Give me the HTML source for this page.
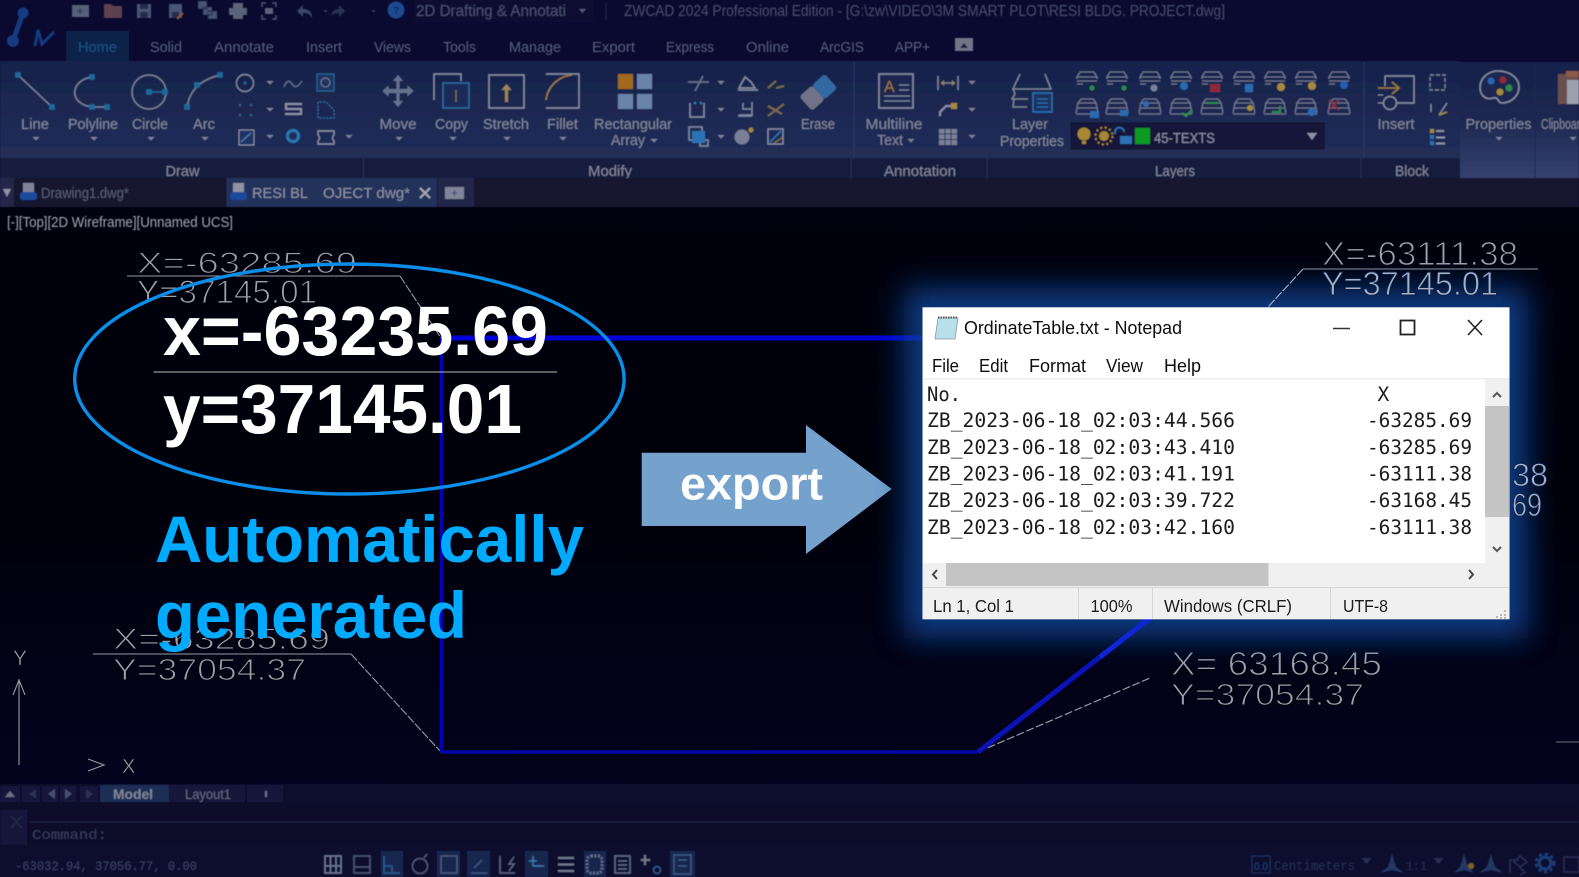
<!DOCTYPE html>
<html lang="en"><head><meta charset="utf-8"><title>ZWCAD export</title>
<style>
html,body{margin:0;padding:0;width:1579px;height:877px;overflow:hidden;background:#00000c}
svg{display:block;position:absolute;left:0;top:0}
text{font-family:"Liberation Sans",sans-serif}
text.mono{font-family:"Liberation Mono",monospace}
.dj text{font-family:"DejaVu Sans Mono",monospace}
</style></head><body>
<svg width="1579" height="877" viewBox="0 0 1579 877" xmlns="http://www.w3.org/2000/svg">
<defs>
<linearGradient id="bgd" x1="0" y1="0" x2="0" y2="1"><stop offset="0" stop-color="#01010f"/><stop offset=".5" stop-color="#00000a"/><stop offset="1" stop-color="#03031e"/></linearGradient>
<linearGradient id="rib" x1="0" y1="0" x2="0" y2="1"><stop offset="0" stop-color="#16224a"/><stop offset="1" stop-color="#212e58"/></linearGradient>
<linearGradient id="rib2" x1="0" y1="0" x2="0" y2="1"><stop offset="0" stop-color="#16224a"/><stop offset=".5" stop-color="#1c2850"/><stop offset="1" stop-color="#35416e"/></linearGradient>
<filter id="b1" x="-5%" y="-5%" width="110%" height="110%"><feGaussianBlur stdDeviation=".6"/></filter>
<filter id="b2" x="-5%" y="-5%" width="110%" height="110%"><feGaussianBlur stdDeviation=".35"/></filter>
<filter id="gl" x="-20%" y="-30%" width="140%" height="160%"><feGaussianBlur stdDeviation="15"/></filter>
<polygon id="car" points="-3.5,0 3.5,0 0,3.5" fill="#7b8199"/>
<g id="li">
 <path d="M-7-8h14l3 5h-20zM-10-3v2M10-3v2" fill="none" stroke="#6f758e" stroke-width="1.3"/>
 <path d="M-10 1h20M-10 4h6" fill="none" stroke="#6f758e" stroke-width="1.3"/>
</g>
<g id="li2">
 <path d="M-6-9h12l3 4h-18zM-9-5l-1 5h20l-1-5M-10 0l-1 5M10 0l1 5M-11 6h22" fill="none" stroke="#6f758e" stroke-width="1.3"/>
</g>
<rect id="sq" x="-2.8" y="-2.8" width="5.6" height="5.6" fill="#1c6a9c"/>
</defs>

<!-- backgrounds -->
<rect width="1579" height="877" fill="#0a0a30"/>
<rect y="207" width="1579" height="578" fill="url(#bgd)"/>

<!-- CAD drawing -->
<g fill="#a0a0aa" stroke="#01010e" stroke-width="1.100" style="paint-order:fill stroke">
 <text x="137" y="273" font-size="30" textLength="220" lengthAdjust="spacingAndGlyphs">X=-63285.69</text>
 <text x="137" y="303" font-size="32" textLength="180" lengthAdjust="spacingAndGlyphs">Y=37145.01</text>
 <text x="113" y="649" font-size="30" textLength="217" lengthAdjust="spacingAndGlyphs">X=-63285.69</text>
 <text x="113" y="680" font-size="31" textLength="193" lengthAdjust="spacingAndGlyphs">Y=37054.37</text>
 <text x="1171" y="675" font-size="33" textLength="211" lengthAdjust="spacingAndGlyphs">X= 63168.45</text>
 <text x="1171" y="705" font-size="31" textLength="193" lengthAdjust="spacingAndGlyphs">Y=37054.37</text>
 <text x="1322" y="265" font-size="33" textLength="196" lengthAdjust="spacingAndGlyphs">X=-63111.38</text>
 <text x="13" y="665" font-size="21" stroke-width=".5">Y</text>
 <text x="122" y="773" font-size="20" stroke-width=".5">X</text>
</g>
<g fill="none" stroke="#9a9aa5" stroke-width="1.1">
 <path d="M127 276H400M93 654H351M1303 269H1538"/>
 <path d="M400 276L441 338M351 654L441 752" stroke-dasharray="9 1.5"/>
 <path d="M978 752L1150 678" stroke-dasharray="8 2.5" stroke-width="1.2"/>
 <path d="M19 679V765M19 680L13 695M19 680L25 695M88 759L104 765L88 771"/>
 <path d="M1556 742H1579" stroke="#6f6f78"/>
</g>
<!-- blue lines -->
<path d="M441.500 338H925" stroke="#0000d8" stroke-width="5" fill="none"/>
<path d="M441.500 338V752" stroke="#0202b4" stroke-width="3.6" fill="none"/>
<path d="M441 752H978" stroke="#0404a8" stroke-width="3.6" fill="none"/>
<path d="M978 752L1150 618" stroke="#0a12b8" stroke-width="5" fill="none"/>

<!-- Title bar -->
<g filter="url(#b1)">
 <!-- logo -->
 <g fill="none" stroke="#173a80" stroke-width="4">
  <path d="M23 13L13 41" stroke-width="5"/>
  <path d="M35 46L38 30L42 44L54 32" stroke-width="3"/>
 </g>
 <circle cx="23" cy="13" r="5.5" fill="#173a80"/><circle cx="13" cy="41" r="6" fill="#173a80"/>
 <!-- QAT -->
 <rect x="72" y="5" width="17" height="12" fill="#59607a"/><path d="M80 8v6M77 11h6" stroke="#2a3a66" stroke-width="1.3"/>
 <path d="M104 4h7l2 2h9v12h-18z" fill="#5b4250"/>
 <rect x="137" y="4" width="14" height="14" fill="#4c5474"/><rect x="140" y="4" width="8" height="5" fill="#252b4d"/><rect x="140" y="12" width="8" height="6" fill="#252b4d"/>
 <rect x="169" y="4" width="13" height="14" fill="#4c5474"/><rect x="172" y="12" width="7" height="6" fill="#252b4d"/><path d="M177 19l6-6" stroke="#8a5a2a" stroke-width="2"/>
 <path d="M198 1h9v8h-9zM203 7h9v8h-9zM208 11h9v8h-9z" fill="#4c5474" stroke="#1a2248"/>
 <path d="M233 3h10v5h-10zM229 8h18v7h-18zM233 13h10v6h-10z" fill="#5c627c"/>
 <path d="M262 7V3h4M276 7V3h-4M262 15v4h4M276 15v4h-4" stroke="#4c5474" stroke-width="1.5" fill="none"/><rect x="265" y="8" width="8" height="6" fill="#5c627c"/>
 <path d="M297 11l6-6v4c6 0 9 3 9 9c-2-4-5-5-9-5v4z" fill="#3c4568"/>
 <path d="M345 11l-6-6v4c-5 0-7 3-8 7c2-2 4-3 8-3v4z" fill="#2b3152"/>
 <path d="M324 11h3M372 11h3" stroke="#3c4568" stroke-width="1.5"/>
 <circle cx="396" cy="10" r="8.5" fill="#1c4a90"/><text x="396" y="14" font-size="11" fill="#0e2a5c" text-anchor="middle" font-weight="bold">?</text>
 <rect x="414" y="0" width="180" height="22" fill="#0b0b33"/>
 <text x="416" y="16" font-size="16" fill="#484f6e" textLength="150" lengthAdjust="spacingAndGlyphs">2D Drafting &amp; Annotati</text>
 <polygon points="579,9 586,9 582.5,13" fill="#4f5675"/>
 <path d="M606 3V20" stroke="#1d2044" stroke-width="1.5"/>
 <text x="624" y="16" font-size="16" fill="#484f6e" textLength="601" lengthAdjust="spacingAndGlyphs">ZWCAD 2024 Professional Edition - [G:\zw\VIDEO\3M SMART PLOT\RESI BLDG. PROJECT.dwg]</text>

 <!-- ribbon tabs -->
 <rect x="66" y="31" width="63" height="30" fill="#11224a"/>
 <g font-size="14.5" fill="#596180">
  <text x="78" y="52" fill="#1c5184" textLength="39" lengthAdjust="spacingAndGlyphs">Home</text>
  <text x="150" y="52" textLength="32" lengthAdjust="spacingAndGlyphs">Solid</text>
  <text x="214" y="52" textLength="60" lengthAdjust="spacingAndGlyphs">Annotate</text>
  <text x="306" y="52" textLength="36" lengthAdjust="spacingAndGlyphs">Insert</text>
  <text x="374" y="52" textLength="37" lengthAdjust="spacingAndGlyphs">Views</text>
  <text x="443" y="52" textLength="33" lengthAdjust="spacingAndGlyphs">Tools</text>
  <text x="509" y="52" textLength="52" lengthAdjust="spacingAndGlyphs">Manage</text>
  <text x="592" y="52" textLength="43" lengthAdjust="spacingAndGlyphs">Export</text>
  <text x="666" y="52" textLength="48" lengthAdjust="spacingAndGlyphs">Express</text>
  <text x="746" y="52" textLength="43" lengthAdjust="spacingAndGlyphs">Online</text>
  <text x="820" y="52" textLength="44" lengthAdjust="spacingAndGlyphs">ArcGIS</text>
  <text x="895" y="52" textLength="35" lengthAdjust="spacingAndGlyphs">APP+</text>
 </g>
 <rect x="955" y="38" width="18" height="13" fill="#6f7488"/><polygon points="960,48 968,48 964,43" fill="#1a1c3c"/>

 <!-- ribbon body -->
 <rect y="61" width="1460" height="97" fill="url(#rib)"/>
 <rect y="158" width="1460" height="20" fill="#171b3c"/>
 <rect x="1460" y="62" width="119" height="116" fill="url(#rib2)"/>
 <path d="M1535 62V178" stroke="#1a2550" stroke-width="1"/>
 <path d="M363.5 158V178M851 158V178M987 158V178M1361 158V178" stroke="#2c3358"/>
 <path d="M854 62V158M1364 62V158" stroke="#2a3866"/>

 <!-- Draw icons -->
 <g fill="none" stroke="#7a8096" stroke-width="1.5">
  <path d="M18 75L52 107"/>
  <path d="M92 77C70 80 68 104 92 107H107"/>
  <circle cx="149" cy="92" r="17"/><path d="M149 92H165" stroke="#1c6a9c"/>
  <path d="M187 107C190 90 200 80 220 75"/>
 </g>
 <use href="#sq" x="18" y="75"/><use href="#sq" x="52" y="107"/>
 <use href="#sq" x="92" y="77"/><use href="#sq" x="92" y="107"/><use href="#sq" x="107" y="107"/>
 <use href="#sq" x="149" y="92"/><use href="#sq" x="165" y="92"/>
 <use href="#sq" x="187" y="107"/><use href="#sq" x="197" y="85"/><use href="#sq" x="220" y="75"/>
 <!-- Draw small -->
 <circle cx="245" cy="83" r="8.5" fill="none" stroke="#80869c" stroke-width="1.4"/><circle cx="245" cy="83" r="1.5" fill="#1c6a9c"/>
 <path d="M284 87c3-7 5-7 8-3s5 4 10-3" fill="none" stroke="#5d6a8c" stroke-width="1.5"/>
 <rect x="317" y="74" width="17" height="17" fill="#1b3564" stroke="#2c6a9c"/><circle cx="325.500" cy="82.500" r="4.500" fill="none" stroke="#7b8199"/>
 <g fill="#2a6a9c"><rect x="239" y="104" width="2" height="2"/><rect x="250" y="104" width="2" height="2"/><rect x="239" y="114" width="2" height="2"/><rect x="250" y="114" width="2" height="2"/></g>
 <path d="M302 104h-16v5h15v5h-16" fill="none" stroke="#8a90a5" stroke-width="2"/>
 <path d="M318 118v-16h8l8 8v8z" fill="none" stroke="#2c6a9c" stroke-width="1.4" stroke-dasharray="2 1.500"/>
 <rect x="239" y="130" width="15" height="15" fill="#1f3666" stroke="#8a90a5"/><path d="M241 142l10-9" stroke="#6b8ab0"/>
 <circle cx="293" cy="136" r="5.500" fill="none" stroke="#2878b4" stroke-width="3"/>
 <path d="M318 131h16v4c-2 2-2 4 0 6v3h-16v-3c2-2 2-4 0-6z" fill="none" stroke="#8a90a5" stroke-width="1.4"/>
 <use href="#car" x="270" y="81"/><use href="#car" x="270" y="108"/><use href="#car" x="270" y="135"/><use href="#car" x="349" y="135"/>

 <!-- Modify -->
 <path d="M398 75l-5 6h3.500v8h-8v-3.500l-6 5.500l6 5.500v-3.500h8v8h-3.500l5 6l5-6h-3.500v-8h8v3.500l6-5.500l-6-5.500v3.500h-8v-8h3.500z" fill="#66708f"/>
 <path d="M434 100V74h27v7" fill="none" stroke="#8a90a5" stroke-width="1.4"/><rect x="443" y="83" width="26" height="25" fill="#1b2c58" stroke="#2c6a9c" stroke-width="1.6"/><path d="M456 90v12" stroke="#8a7040" stroke-width="1.4"/>
 <rect x="489" y="75" width="35" height="33" fill="none" stroke="#8a90a5" stroke-width="1.5"/><path d="M506.500 84l-5 6h3.500v12h3v-12h3.500z" fill="#9c8458"/>
 <path d="M546 74h33v34h-33" fill="none" stroke="#8a90a5" stroke-width="1.4"/><path d="M546 100C548 85 560 76 572 75" fill="none" stroke="#9c7a45" stroke-width="1.6"/>
 <rect x="618" y="74" width="15" height="15" fill="#a2691e"/><rect x="637" y="74" width="15" height="15" fill="#6b83a8"/><rect x="618" y="94" width="15" height="15" fill="#6b83a8"/><rect x="637" y="94" width="15" height="15" fill="#6b83a8"/>
 <!-- modify small -->
 <path d="M688 82h21M703 76L695 91" fill="none" stroke="#6f7690" stroke-width="1.4"/>
 <path d="M739 88l6-11l6 5l4 6zM738 90h20" fill="none" stroke="#8a90a5" stroke-width="1.4"/>
 <path d="M768 88l8-7M776 88l8-2" fill="none" stroke="#7c6c4a" stroke-width="2"/>
 <path d="M690 103v14h14v-14" fill="none" stroke="#8a90a5" stroke-width="1.4"/><path d="M694 103h2M700 103h2" stroke="#2c88c4" stroke-width="2"/>
 <path d="M739 115h13v-13M743 103v6h9M738 116h14" fill="none" stroke="#7f8aa5" stroke-width="1.4"/>
 <path d="M768 116l16-12M768 106l14 8" fill="none" stroke="#7c6c4a" stroke-width="2"/>
 <rect x="689" y="127" width="13" height="13" fill="none" stroke="#7f8aa5" stroke-width="1.5"/><rect x="700" y="140" width="8" height="6" fill="none" stroke="#7f8aa5" stroke-width="1.5"/><rect x="692" y="131" width="13" height="12" fill="#2c72b4"/>
 <circle cx="742" cy="137" r="7.500" fill="#7a7f96"/><circle cx="751" cy="130" r="2.500" fill="#a68a3c"/>
 <rect x="768" y="129" width="15" height="15" fill="none" stroke="#8a90a5" stroke-width="1.4"/><path d="M770 142l11-11" stroke="#2c72b4" stroke-width="1.6"/><path d="M774 143l9-6" stroke="#a68a3c"/>
 <use href="#car" x="721" y="81"/><use href="#car" x="721" y="108"/><use href="#car" x="721" y="135"/>
 <!-- Erase -->
 <g transform="rotate(-42 818 92)"><rect x="801" y="83" width="17" height="19" rx="3" fill="#6f7288"/><rect x="818" y="83" width="17" height="19" rx="3" fill="#3269a2"/></g>
 <!-- Annotation -->
 <rect x="879" y="74" width="34" height="34" fill="#1a2550" stroke="#8a90a5" stroke-width="1.5"/>
 <text x="884" y="92" font-size="16" fill="#9c7c3c">A</text><path d="M899 85h10M899 90h10M884 96h26M884 101h26" stroke="#7f8aa5" stroke-width="1.3"/>
 <path d="M938 76v14M958 76v14M941 83h14" stroke="#80869c" stroke-width="1.5"/><path d="M941 83l3-3v6zM955 83l-3-3v6z" fill="#9c8458"/>
 <path d="M940 116v-4l6-6h8" fill="none" stroke="#8a90a5" stroke-width="2"/><rect x="951" y="103" width="6" height="6" fill="#a68a3c"/>
 <rect x="939" y="129" width="18" height="16" fill="#7b8199"/><path d="M939 134h18M939 139.500h18M945 129v16M951 129v16" stroke="#242f58"/>
 <use href="#car" x="972" y="81"/><use href="#car" x="972" y="108"/><use href="#car" x="972" y="135"/>
 <!-- Layers -->
 <path d="M1020 74l-7 15h38l-6-15M1013 89l2 5l-3 5h16M1014 99l-1 8h14" fill="none" stroke="#838aa0" stroke-width="1.3"/>
 <rect x="1033" y="93" width="19" height="19" fill="#1a3160" stroke="#2a72b0" stroke-width="1.5"/><path d="M1037 99h11M1037 103h11M1037 107h11" stroke="#2a72b0" stroke-width="1.2"/>
 <g>
  <use href="#li" x="1087" y="80"/><use href="#li" x="1117" y="80"/><use href="#li" x="1150" y="80"/><use href="#li" x="1181" y="80"/><use href="#li" x="1212" y="80"/><use href="#li" x="1244" y="80"/><use href="#li" x="1275" y="80"/><use href="#li" x="1306" y="80"/><use href="#li" x="1339" y="80"/>
  <use href="#li2" x="1087" y="108"/><use href="#li2" x="1117" y="108"/><use href="#li2" x="1150" y="108"/><use href="#li2" x="1181" y="108"/><use href="#li2" x="1212" y="108"/><use href="#li2" x="1244" y="108"/><use href="#li2" x="1275" y="108"/><use href="#li2" x="1306" y="108"/><use href="#li2" x="1339" y="108"/>
 </g>
 <circle cx="1092" cy="88" r="2.500" fill="#2a8c4a"/><circle cx="1124" cy="88" r="2.500" fill="#2a8c4a"/><circle cx="1154" cy="88" r="3.500" fill="#7b8199"/><circle cx="1184" cy="86" r="4" fill="#2a6ab0"/><rect x="1210" y="84" width="10" height="8" fill="#8c2a3a"/><rect x="1245" y="84" width="8" height="8" fill="#2a6ab0"/><circle cx="1281" cy="87" r="4" fill="#a68a3c"/><circle cx="1312" cy="86" r="4" fill="#a68a3c"/><circle cx="1344" cy="85" r="4" fill="#2a5ab0"/>
 <rect x="1090" y="111" width="9" height="7" fill="#2a6ab0"/><rect x="1120" y="110" width="8" height="6" fill="#2a6ab0"/><circle cx="1146" cy="104" r="3" fill="#2a6ab0"/><path d="M1182 113l4 3l6-6" stroke="#2a8c4a" stroke-width="2" fill="none"/><path d="M1207 103h10" stroke="#2a8c4a" stroke-width="2"/><circle cx="1250" cy="108" r="3" fill="#a68a3c"/><path d="M1272 112h8v-6" stroke="#2a8c4a" stroke-width="2" fill="none"/><circle cx="1312" cy="112" r="4" fill="#2a6ab0"/><path d="M1329 100l10 10M1339 100l-10 10" stroke="#8c2a3a" stroke-width="1.800"/>
 <!-- combo -->
 <rect x="1071" y="123" width="253" height="26" fill="#14183a" stroke="#0c0e28"/>
 <circle cx="1084" cy="134" r="6.500" fill="#a88632"/><rect x="1082" y="141" width="4" height="3" fill="#a88632"/>
 <circle cx="1104" cy="136" r="5" fill="#a88632"/><circle cx="1104" cy="136" r="8.500" fill="none" stroke="#a88632" stroke-width="2" stroke-dasharray="2 2.500"/>
 <path d="M1115 134v-2c0-6 9-6 9 0" fill="none" stroke="#2c72b4" stroke-width="1.8"/><rect x="1120" y="136" width="12" height="8" fill="#2c72b4"/>
 <rect x="1135" y="128" width="15" height="16" fill="#0a9a20"/>
 <text x="1154" y="143" font-size="15" fill="#8d92a5" textLength="61" lengthAdjust="spacingAndGlyphs">45-TEXTS</text>
 <polygon points="1307,133 1317,133 1312,140" fill="#8d92a5"/>
 <!-- Block -->
 <path d="M1385 76h29v27h-17M1385 76v10" fill="none" stroke="#8a90a5" stroke-width="1.4"/><circle cx="1390" cy="103" r="6.500" fill="none" stroke="#8a90a5" stroke-width="1.4"/><path d="M1378 88h20M1392 82l7 6l-7 6" fill="none" stroke="#9c7c3c" stroke-width="1.600"/>
 <path d="M1378 95h5M1378 103h5" stroke="#8a90a5"/>
 <rect x="1430" y="75" width="15" height="15" fill="none" stroke="#7b8199" stroke-dasharray="4 2" stroke-width="1.400"/>
 <path d="M1431 104v8M1447 103l-8 12" stroke="#8a90a5" stroke-width="1.300"/><path d="M1439 115l8-3" stroke="#a68a3c" stroke-width="1.600"/>
 <path d="M1436 131h8M1436 137.500h9M1436 143.500h9" stroke="#8a90a5" stroke-width="2"/><rect x="1430" y="129" width="4" height="4" fill="#a68a3c"/><rect x="1430" y="135" width="4" height="4" fill="#2c72b4"/><rect x="1430" y="141" width="4" height="4" fill="#2c72b4"/>
 <!-- Properties / Clipboard -->
 <path d="M1498 71c12 0 21 7 21 16c0 9-8 16-17 16c-4 0-3-4-6-5c-3-1-6 2-10 0c-4-2-6-6-6-10c0-10 8-17 18-17z" fill="#1c2850" stroke="#858ba0" stroke-width="1.6"/>
 <circle cx="1491" cy="81" r="3.500" fill="#2c64b4"/><circle cx="1503" cy="80" r="3.500" fill="#8c2a3a"/><circle cx="1509" cy="88" r="3.500" fill="#2a8c4a"/><circle cx="1500" cy="92" r="3.500" fill="#a68a3c"/>
 <rect x="1558" y="74" width="21" height="30" fill="#6a5050"/><rect x="1566" y="71" width="13" height="6" fill="#8c5a4a"/><rect x="1567" y="80" width="12" height="24" fill="#9ca0b0"/>

 <!-- ribbon labels -->
 <g font-size="14.5" fill="#83889c" text-anchor="middle">
  <text x="35" y="129" textLength="28" lengthAdjust="spacingAndGlyphs">Line</text>
  <text x="93" y="129" textLength="50" lengthAdjust="spacingAndGlyphs">Polyline</text>
  <text x="150" y="129" textLength="36" lengthAdjust="spacingAndGlyphs">Circle</text>
  <text x="204" y="129" textLength="22" lengthAdjust="spacingAndGlyphs">Arc</text>
  <text x="398" y="129" textLength="37" lengthAdjust="spacingAndGlyphs">Move</text>
  <text x="451.500" y="129" textLength="33" lengthAdjust="spacingAndGlyphs">Copy</text>
  <text x="506" y="129" textLength="46" lengthAdjust="spacingAndGlyphs">Stretch</text>
  <text x="562.500" y="129" textLength="31" lengthAdjust="spacingAndGlyphs">Fillet</text>
  <text x="633" y="129" textLength="78" lengthAdjust="spacingAndGlyphs">Rectangular</text>
  <text x="628" y="145" textLength="34" lengthAdjust="spacingAndGlyphs">Array</text>
  <text x="818" y="129" textLength="34" lengthAdjust="spacingAndGlyphs">Erase</text>
  <text x="894" y="129" textLength="57" lengthAdjust="spacingAndGlyphs">Multiline</text>
  <text x="890" y="145" textLength="26" lengthAdjust="spacingAndGlyphs">Text</text>
  <text x="1030" y="129" textLength="36" lengthAdjust="spacingAndGlyphs">Layer</text>
  <text x="1032" y="146" textLength="64" lengthAdjust="spacingAndGlyphs">Properties</text>
  <text x="1396" y="129" textLength="37" lengthAdjust="spacingAndGlyphs">Insert</text>
  <text x="1498.500" y="129" textLength="66" lengthAdjust="spacingAndGlyphs">Properties</text>
  <text x="182.500" y="176" textLength="34" lengthAdjust="spacingAndGlyphs">Draw</text>
  <text x="610" y="176" textLength="44" lengthAdjust="spacingAndGlyphs">Modify</text>
  <text x="920" y="176" textLength="72" lengthAdjust="spacingAndGlyphs">Annotation</text>
  <text x="1175" y="176" textLength="40" lengthAdjust="spacingAndGlyphs">Layers</text>
  <text x="1412" y="176" textLength="34" lengthAdjust="spacingAndGlyphs">Block</text>
 </g>
 <text x="1541" y="129" font-size="14.500" fill="#83889c" textLength="45" lengthAdjust="spacingAndGlyphs">Clipboard</text>
 <g><use href="#car" x="36" y="137"/><use href="#car" x="94" y="137"/><use href="#car" x="151" y="137"/><use href="#car" x="205" y="137"/><use href="#car" x="399" y="137"/><use href="#car" x="453" y="137"/><use href="#car" x="507" y="137"/><use href="#car" x="563" y="137"/><use href="#car" x="654" y="139"/><use href="#car" x="911" y="139"/><use href="#car" x="1499" y="137"/><use href="#car" x="1573" y="137"/></g>

 <!-- doc tabs -->
 <rect y="178" width="1579" height="29" fill="#15152e"/>
 <rect x="0" y="178" width="14" height="29" fill="#22284a"/><polygon points="3,189 11,189 7,197" fill="#8d92a5"/>
 <rect x="226.500" y="178" width="210.500" height="29" fill="#24335a"/>
 <rect x="438" y="178" width="36" height="29" fill="#22284a"/>
 <rect x="445" y="187" width="19" height="12" fill="#7f8499"/><path d="M454.500 190v6M451.500 193h6" stroke="#2c4a80"/>
 <rect x="23" y="183" width="11" height="14" fill="#7f8499"/><rect x="20" y="192" width="17" height="8" rx="3" fill="#1f4a9c"/>
 <rect x="233" y="183" width="11" height="14" fill="#8d92a5"/><rect x="230" y="192" width="17" height="8" rx="3" fill="#1f4a9c"/>
 <text x="41" y="198" font-size="15" fill="#565c76" textLength="88" lengthAdjust="spacingAndGlyphs">Drawing1.dwg*</text>
 <text x="252" y="198" font-size="15" fill="#8d92a5" textLength="56" lengthAdjust="spacingAndGlyphs">RESI BL</text>
 <text x="323" y="198" font-size="15" fill="#8d92a5" textLength="87" lengthAdjust="spacingAndGlyphs">OJECT dwg*</text>
 <path d="M420 188l10 10M430 188l-10 10" stroke="#a4a8b8" stroke-width="2"/>
 <text x="7" y="227" font-size="14.500" fill="#a5a8b5" textLength="226" lengthAdjust="spacingAndGlyphs">[-][Top][2D Wireframe][Unnamed UCS]</text>

 <!-- bottom -->
 <rect y="784" width="1579" height="93" fill="#0d0e2f"/>
 <rect y="803" width="1579" height="42" fill="#0a0b2b"/>
 <path d="M30 822H1579" stroke="#1d2147" stroke-width="1"/>
 <rect x="0" y="786" width="20" height="16" fill="#12163a"/><polygon points="5,797 15,797 10,791" fill="#6a7088"/>
 <rect x="22" y="786" width="18" height="16" fill="#12163a"/><polygon points="36,789 36,799 29,794" fill="#2c3350"/>
 <rect x="42" y="786" width="16" height="16" fill="#12163a"/><polygon points="55,789 55,799 48,794" fill="#4a5070"/>
 <rect x="60" y="786" width="16" height="16" fill="#12163a"/><polygon points="65,789 65,799 72,794" fill="#4a5070"/>
 <rect x="80" y="786" width="18" height="16" fill="#12163a"/><polygon points="86,789 86,799 93,794" fill="#2c3350"/>
 <rect x="100" y="785" width="69" height="17" fill="#1e2e52"/>
 <rect x="170" y="785" width="75" height="17" fill="#16193a"/>
 <rect x="247" y="785" width="36" height="17" fill="#16193a"/>
 <text x="113" y="799" font-size="14" font-weight="bold" fill="#7f8599" textLength="40" lengthAdjust="spacingAndGlyphs">Model</text>
 <text x="185" y="799" font-size="14" fill="#62687f" textLength="46" lengthAdjust="spacingAndGlyphs">Layout1</text>
 <path d="M266 791v6" stroke="#6a7088" stroke-width="2"/>
 <rect x="0" y="810" width="27" height="35" fill="#12163a"/>
 <path d="M11 816l11 12M22 816l-11 12" stroke="#20264a" stroke-width="2"/>
 <text x="32" y="839" font-size="14" class="mono" fill="#363c5c" textLength="75" lengthAdjust="spacingAndGlyphs">Command:</text>
 <text x="15" y="870" font-size="12.500" class="mono" fill="#3a4162" textLength="182" lengthAdjust="spacingAndGlyphs">-63032.94, 37056.77, 0.00</text>

 <!-- status icons -->
 <rect x="381" y="851" width="22" height="26" fill="#13254e"/><rect x="437" y="851" width="23" height="26" fill="#13254e"/><rect x="467" y="851" width="23" height="26" fill="#13254e"/><rect x="525" y="851" width="23" height="26" fill="#13254e"/><rect x="584" y="851" width="22" height="26" fill="#13254e"/><rect x="670" y="851" width="25" height="26" fill="#13254e"/>
 <g fill="none" stroke="#6f7890" stroke-width="1.500">
  <path d="M325 856h16v17h-16zM330.500 856v17M336 856v17M325 866h16" stroke="#707a98"/>
  <path d="M354 856h16v17h-16zM354 867h16" stroke="#4e5878"/>
  <path d="M384 856v17h16M384 866h8v7" stroke="#2a5a94"/>
  <circle cx="420" cy="866" r="7.500" stroke="#4e5878"/><path d="M424 858l3-4" stroke="#4e5878"/>
  <rect x="441" y="856" width="16" height="17" stroke="#4e5878"/>
  <path d="M471 873h16M474 868l8-8" stroke="#3c5888"/>
  <path d="M500 856v17h15M514 857l-5 7h5l-5 7" stroke="#5a6480"/>
  <path d="M533 856v10M529 861h8M533 866h11" stroke="#3c7ab0"/>
  <path d="M558 858h16M558 864.500h16M558 871h16" stroke="#6f7890" stroke-width="2"/>
  <rect x="587" y="856" width="15" height="17" rx="4" stroke="#5f6a8a" stroke-dasharray="2 1.500" stroke-width="3"/>
  <rect x="615" y="856" width="15" height="17" stroke="#5f6a8a"/><path d="M618 861h9M618 865h9M618 869h9" stroke="#5f6a8a"/>
  <path d="M645 855v10M641 860h9" stroke="#6f7890" stroke-width="2"/><circle cx="657" cy="870" r="3.500" stroke="#2a5a94"/>
  <rect x="674" y="855" width="17" height="19" stroke="#3c5888"/><path d="M678 860h9M678 866h9" stroke="#3c5888"/>
 </g>
 <rect x="1252" y="856" width="18" height="17" fill="none" stroke="#1a2f5c" stroke-width="1.200"/>
 <text x="1261" y="870" font-size="11" fill="#24407a" text-anchor="middle" textLength="14" lengthAdjust="spacingAndGlyphs">0.0</text>
 <text x="1274" y="870" font-size="13.500" class="mono" fill="#262d4e" textLength="81" lengthAdjust="spacingAndGlyphs">Centimeters</text>
 <polygon points="1361,858 1372,858 1366.500,864" fill="#262d4e"/>
 <path d="M1392 854l4 13l8 6l-12-3l-12 3l8-6z" fill="#223862"/>
 <text x="1406" y="870" font-size="13" class="mono" fill="#262d4e" textLength="21" lengthAdjust="spacingAndGlyphs">1:1</text>
 <polygon points="1433,858 1444,858 1438.500,864" fill="#262d4e"/>
 <path d="M1464 854l4 13l6 6l-10-3l-10 3l6-6z" fill="#223862"/><circle cx="1471" cy="866" r="3" fill="#7a6428"/>
 <path d="M1491 854l4 13l8 6l-12-3l-12 3l8-6z" fill="#223862"/>
 <path d="M1510 873v-13h9M1520 856l7 6l-7 5l-6-5zM1520 868l5 4l-5 3" fill="none" stroke="#262f54" stroke-width="1.500"/>
 <circle cx="1545" cy="863" r="6" fill="none" stroke="#1a3e78" stroke-width="3"/><circle cx="1545" cy="863" r="9" fill="none" stroke="#1a3e78" stroke-width="2.500" stroke-dasharray="3 3"/>
 <rect x="1564" y="857" width="15" height="15" fill="none" stroke="#262f54" stroke-width="1.500"/>
</g>

<!-- overlay annotation -->
<path d="M153.500 372H557" stroke="#b8b8b8" stroke-width="1.100"/>
<g font-weight="bold">
 <text x="163" y="355" font-size="70" fill="#fff" textLength="385" lengthAdjust="spacingAndGlyphs">x=-63235.69</text>
 <text x="163" y="433" font-size="70" fill="#fff" textLength="359" lengthAdjust="spacingAndGlyphs">y=37145.01</text>
 <text x="155" y="562" font-size="66" fill="#00aaff" textLength="429" lengthAdjust="spacingAndGlyphs">Automatically</text>
 <text x="155" y="638" font-size="66" fill="#00aaff" textLength="312" lengthAdjust="spacingAndGlyphs">generated</text>
</g>
<ellipse cx="349.400" cy="379" rx="274.700" ry="115" fill="none" stroke="#0a8ee8" stroke-width="3.400"/>

<!-- export arrow -->
<polygon points="641.700,452.700 806,452.700 806,425 891.700,489 806,554 806,526 641.700,526" fill="#74a2cd"/>
<text x="680" y="499.500" font-size="46" font-weight="bold" fill="#fff" textLength="143" lengthAdjust="spacingAndGlyphs">export</text>

<!-- glow -->
<rect x="904" y="288" width="624" height="350" fill="#0d4596" filter="url(#gl)" opacity=".85"/>
<g fill="#a8b0c2" stroke="#06204a" stroke-width=".9" style="paint-order:fill stroke">
 <text x="1322" y="295" font-size="33" textLength="176" lengthAdjust="spacingAndGlyphs">Y=37145.01</text>
 <text x="1512" y="486" font-size="32" textLength="36" lengthAdjust="spacingAndGlyphs">38</text>
 <text x="1512" y="516" font-size="32" textLength="30" lengthAdjust="spacingAndGlyphs">69</text>
</g>
<path d="M1303 269L1268 307" stroke="#a8b4c8" stroke-width="1.100" stroke-dasharray="9 1.500"/>
<path d="M1100 657L1150 618" stroke="#1024d8" stroke-width="5"/>

<!-- Notepad -->
<g filter="url(#b2)">
 <rect x="922.500" y="307.300" width="587" height="312" fill="#fff"/>
 <rect x="923" y="378" width="586" height="1.500" fill="#eeeeee"/>
 <!-- icon -->
 <path d="M938 318h20l-3 21h-20z" fill="#b9e0ea" stroke="#7f9aa0" stroke-width=".8"/>
 <path d="M938 317.500h20" stroke="#555" stroke-width="2" stroke-dasharray="1.500 1"/>
 <g fill="#111">
  <text x="964" y="334" font-size="18.500" textLength="218" lengthAdjust="spacingAndGlyphs">OrdinateTable.txt - Notepad</text>
  <g font-size="18">
   <text x="932" y="372" textLength="27" lengthAdjust="spacingAndGlyphs">File</text>
   <text x="979" y="372" textLength="29" lengthAdjust="spacingAndGlyphs">Edit</text>
   <text x="1029" y="372" textLength="57" lengthAdjust="spacingAndGlyphs">Format</text>
   <text x="1106" y="372" textLength="37" lengthAdjust="spacingAndGlyphs">View</text>
   <text x="1164" y="372" textLength="37" lengthAdjust="spacingAndGlyphs">Help</text>
  </g>
 </g>
 <path d="M1333 328.500H1350" stroke="#333" stroke-width="1.600"/>
 <rect x="1400.500" y="320.500" width="14" height="14" fill="none" stroke="#222" stroke-width="1.800"/>
 <path d="M1468 320l14 15M1482 320l-14 15" stroke="#222" stroke-width="1.600"/>
 <g class="dj" font-size="19.500" fill="#1a1a1a">
  <text x="927" y="401" textLength="34" lengthAdjust="spacingAndGlyphs">No.</text>
  <text x="1377.500" y="401">X</text>
  <text x="927" y="427" textLength="308" lengthAdjust="spacingAndGlyphs">ZB_2023-06-18_02:03:44.566</text>
  <text x="927" y="454" textLength="308" lengthAdjust="spacingAndGlyphs">ZB_2023-06-18_02:03:43.410</text>
  <text x="927" y="480.500" textLength="308" lengthAdjust="spacingAndGlyphs">ZB_2023-06-18_02:03:41.191</text>
  <text x="927" y="507" textLength="308" lengthAdjust="spacingAndGlyphs">ZB_2023-06-18_02:03:39.722</text>
  <text x="927" y="534" textLength="308" lengthAdjust="spacingAndGlyphs">ZB_2023-06-18_02:03:42.160</text>
  <text x="1367" y="427" textLength="105" lengthAdjust="spacingAndGlyphs">-63285.69</text>
  <text x="1367" y="454" textLength="105" lengthAdjust="spacingAndGlyphs">-63285.69</text>
  <text x="1367" y="480.500" textLength="105" lengthAdjust="spacingAndGlyphs">-63111.38</text>
  <text x="1367" y="507" textLength="105" lengthAdjust="spacingAndGlyphs">-63168.45</text>
  <text x="1367" y="534" textLength="105" lengthAdjust="spacingAndGlyphs">-63111.38</text>
 </g>
 <!-- v scrollbar -->
 <rect x="1485" y="379" width="24" height="184" fill="#f0f0f0"/>
 <rect x="1485" y="406" width="24" height="111" fill="#c4c4c4"/>
 <path d="M1493 397l4-4l4 4M1493 547l4 4l4-4" fill="none" stroke="#555" stroke-width="2"/>
 <!-- h scrollbar -->
 <rect x="923" y="563" width="586" height="23" fill="#f0f0f0"/>
 <rect x="946" y="563" width="322.500" height="23" fill="#c4c4c4"/>
 <path d="M937 570l-4 4.500l4 4.500M1469 570l4 4.500l-4 4.500" fill="none" stroke="#444" stroke-width="2"/>
 <!-- status -->
 <rect x="923" y="586" width="586" height="33" fill="#f0f0f0"/>
 <path d="M923 587.500H1509" stroke="#d8d8d8"/>
 <path d="M1078.500 588V619M1152.500 588V619M1330.500 588V619" stroke="#d6d6d6"/>
 <g font-size="17.500" fill="#1c1c1c">
  <text x="933" y="612" textLength="81" lengthAdjust="spacingAndGlyphs">Ln 1, Col 1</text>
  <text x="1090.500" y="612" textLength="42" lengthAdjust="spacingAndGlyphs">100%</text>
  <text x="1164" y="612" textLength="128" lengthAdjust="spacingAndGlyphs">Windows (CRLF)</text>
  <text x="1343" y="612" textLength="45" lengthAdjust="spacingAndGlyphs">UTF-8</text>
 </g>
 <g fill="#b8b8b8"><rect x="1504" y="610" width="2" height="2"/><rect x="1500" y="614" width="2" height="2"/><rect x="1504" y="614" width="2" height="2"/><rect x="1496" y="616" width="2" height="2"/><rect x="1500" y="617" width="2" height="2"/><rect x="1504" y="617" width="2" height="2"/></g>
</g>
</svg>
</body></html>
